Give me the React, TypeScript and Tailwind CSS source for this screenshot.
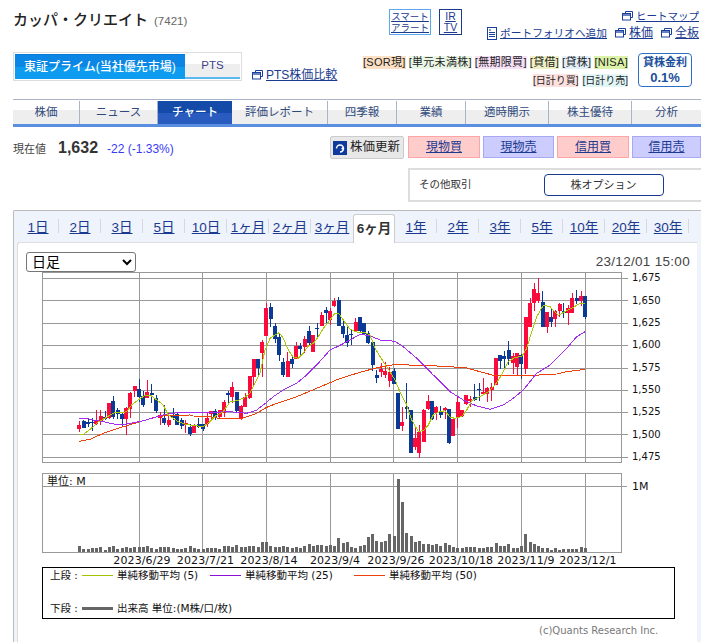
import React from "react";

const FONT = { fontFamily: '"Liberation Sans","Noto Sans CJK JP",sans-serif' };

type C = [number, number, number, number, number, number];
// x, wick top, wick bottom, body top, body bottom, 1 = up (red) 0 = down (blue); crop coords
const c5: C[] = [
  [148,452,486,465,478,1],[161,450,475,453,474,0],[174,445,472,456,462,0],[187,445,482,456,460,0],[199,420,465,450,462,1],[212,420,465,438,452,1],[225,424,450,442,446,0],[238,400,448,400,445,1],[250,378,448,393,440,0],[263,415,448,420,432,0],[276,425,470,432,446,0],[289,410,494,414,446,1],[301,365,445,368,418,1],[314,348,382,348,362,1],[327,327,395,357,380,0],[340,362,410,378,405,0],[352,330,385,366,384,1],[365,342,400,370,375,0],[378,375,428,385,424,0],[391,425,465,435,445,1],[403,405,465,444,460,0],[416,430,470,450,465,1],[429,415,450,435,445,0],[442,430,465,432,464,0],[455,445,478,450,468,0],[467,450,488,459,465,1],[480,462,497,472,492,0],[493,462,490,465,488,1],[506,445,475,462,470,0],[519,462,482,462,476,0],[531,430,470,443,462,1],[544,422,450,424,432,1],[556,418,450,424,444,0],[569,420,445,420,440,1],[582,390,440,396,428,1],[595,362,398,370,376,0],[607,335,400,352,380,1],[620,365,425,366,422,0],[633,405,450,408,446,1],[646,370,412,382,410,1],[659,318,388,318,385,1],[671,267,348,267,320,1],[684,267,320,267,293,0],[697,210,320,216,250,1],[709,100,198,114,198,1],[722,100,172,110,147,0],[735,160,218,168,208,0],[747,188,272,202,255,0],[760,265,322,276,315,0],[773,245,322,273,320,1],[786,262,295,267,282,0],[798,215,268,228,268,1],[811,220,258,227,236,0],[824,198,250,207,232,1],[837,168,225,183,220,0],[849,195,247,195,245,1],[862,158,205,174,178,0],[875,127,168,135,168,1],[888,112,158,120,130,0],[900,115,165,124,150,1],[913,85,110,92,108,1],[926,80,168,90,168,0],
];
const c6: C[] = [
  [9,152,205,168,192,0],[21,170,230,195,218,0],[34,180,225,192,195,0],[47,145,185,156,182,1],[60,141,190,141,182,0],[72,158,195,158,192,0],[85,182,222,190,218,0],[98,215,303,216,285,0],[110,300,338,315,323,0],[123,280,322,297,305,1],[136,275,325,303,315,1],[149,292,350,307,332,1],[162,295,342,304,342,0],[174,368,476,370,476,0],[187,410,482,456,468,1],[200,340,448,410,418,0],[213,420,548,420,548,0],[225,468,540,505,530,1],[238,465,563,486,548,1],[251,418,515,420,515,1],[264,375,420,392,416,1],[276,392,450,392,446,0],[289,408,450,412,430,1],[302,408,445,424,434,0],[315,412,448,414,420,1],[327,417,522,418,518,0],[340,445,497,447,497,1],[353,380,475,396,445,1],[366,420,442,420,438,1],[378,375,405,376,403,1],[391,378,410,388,394,1],[404,342,392,381,389,0],[417,338,392,357,361,0],[429,325,372,366,372,1],[442,352,395,354,372,1],[455,340,392,351,360,1],[468,265,345,265,345,1],[480,255,297,256,272,0],[493,243,298,259,266,0],[506,213,285,240,268,0],[519,250,312,258,278,1],[532,248,316,250,292,1],[544,252,326,254,282,0],[557,140,312,142,296,1],[570,85,172,98,172,1],[582,40,122,57,100,1],[595,24,100,70,92,1],[608,64,170,96,170,0],[621,126,190,126,170,1],[634,118,170,142,155,0],[646,120,172,124,146,1],[659,100,142,102,124,1],[671,100,145,122,128,0],[684,105,165,114,128,1],[697,70,128,84,128,1],[710,60,102,84,92,0],[723,64,108,78,92,1],[735,78,148,78,140,0],
];
const candles = [
  ...c5.map(([x, a, b, c, d, u]) => ({ x: 30 + x / 3, a: 270 + a / 3, b: 270 + b / 3, c: 270 + c / 3, d: 270 + d / 3, u })),
  ...c6.map(([x, a, b, c, d, u]) => ({ x: 340 + x / 3, a: 270 + a / 3, b: 270 + b / 3, c: 270 + c / 3, d: 270 + d / 3, u })),
];

const p5 = (a: number[][]) => a.map(([x, y]) => `${(30 + x / 3).toFixed(1)},${(270 + y / 3).toFixed(1)}`).join(" ");
const p6 = (a: number[][]) => a.map(([x, y]) => `${(340 + x / 3).toFixed(1)},${(270 + y / 3).toFixed(1)}`).join(" ");

const ma5 = p5([[148,493],[160,493],[175,482],[190,470],[205,455],[225,445],[240,435],[255,428],[275,428],[290,425],[305,405],[320,393],[345,376],[360,375],[378,388],[400,405],[415,435],[430,445],[445,455],[465,462],[480,465],[505,468],[520,470],[540,455],[560,435],[580,425],[600,395],[620,392],[640,385],[660,370],[675,340],[690,310],[705,240],[720,205],[735,195],[747,188],[760,205],[775,240],[790,262],[805,265],[820,250],[835,228],[850,220],[865,200],[880,175],[900,150],[915,130],[926,130]]) + " " + p6([[10,150],[30,178],[50,186],[75,188],[90,195],[105,235],[130,275],[150,305],[165,330],[180,365],[200,405],[215,450],[235,484],[250,482],[265,465],[280,435],[300,425],[315,422],[330,442],[345,445],[365,440],[380,420],[395,392],[420,380],[445,365],[465,345],[485,315],[505,275],[525,262],[545,260],[560,235],[575,185],[590,140],[610,106],[630,110],[655,136],[675,125],[700,112],[720,100],[735,100]]);
const ma25 = p5([[148,445],[170,445],[190,450],[220,455],[255,463],[285,463],[310,458],[340,452],[365,445],[400,435],[440,428],[490,428],[540,427],[600,425],[650,430],[680,420],[700,405],[730,380],[760,360],[800,340],[830,315],[860,285],[900,240],[926,228]]) + " " + p6([[30,210],[60,193],[90,197],[120,210],[165,214],[190,230],[230,265],[280,315],[330,365],[370,390],[410,408],[450,418],[490,405],[520,385],[550,360],[590,310],[630,285],[680,235],[710,200],[735,185]]);
const ma50 = p5([[148,514],[180,508],[220,490],[280,470],[320,458],[380,440],[420,436],[480,435],[490,438],[540,440],[560,444],[640,444],[680,430],[710,412],[740,400],[800,380],[860,355],[900,338],[926,327]]) + " " + p6([[50,310],[110,293],[160,284],[250,286],[330,290],[380,294],[420,305],[460,316],[520,316],[580,316],[650,312],[680,305],[735,298]]);

const v5 = [[148,228],[161,237],[174,236],[187,234],[199,234],[212,231],[225,241],[238,232],[250,228],[263,237],[276,235],[289,232],[301,235],[314,232],[327,231],[340,232],[352,228],[365,233],[378,236],[391,231],[403,232],[416,232],[429,235],[442,237],[455,237],[467,234],[480,228],[493,233],[506,237],[519,237],[531,235],[544,234],[556,235],[569,237],[582,228],[595,228],[607,231],[620,225],[633,230],[646,232],[659,229],[671,229],[684,232],[697,216],[709,216],[722,228],[735,232],[747,232],[760,228],[773,231],[786,233],[798,232],[811,235],[824,227],[837,222],[849,227],[862,225],[875,225],[888,227],[900,225],[913,228],[926,204]];
const v6 = [[9,219],[21,216],[34,232],[47,234],[60,228],[72,225],[85,201],[98,192],[110,213],[123,215],[136,213],[149,192],[162,198],[174,27],[187,96],[200,189],[213,198],[225,215],[238,213],[251,222],[264,222],[276,225],[289,222],[302,228],[315,219],[327,225],[340,231],[353,233],[366,233],[378,230],[391,232],[404,231],[417,233],[429,234],[442,232],[455,231],[468,219],[480,228],[493,228],[506,222],[519,234],[532,234],[544,228],[557,192],[570,216],[582,222],[595,228],[608,234],[621,234],[634,240],[646,234],[659,240],[671,237],[684,237],[697,237],[710,237],[723,231],[735,234]];
const vols = [...v5.map(([x, y]) => ({ x: 30 + x / 3, y: 470 + y / 3 })), ...v6.map(([x, y]) => ({ x: 340 + x / 3, y: 470 + y / 3 }))];

const hLines = [300, 322.5, 344.5, 367.5, 389.5, 411.5, 434, 456.5, 277.5];
const vLines = [139.5, 202.5, 266.5, 330.5, 393.5, 457.5, 521.5, 585.5];
const prices: [string, number][] = [["1,675",277.5],["1,650",300],["1,625",322.5],["1,600",344.5],["1,575",367.5],["1,550",389.5],["1,525",411.5],["1,500",434],["1,475",456.5]];
const dates: [string, number][] = [["2023/6/29",142],["2023/7/21",205.5],["2023/8/14",269],["2023/9/4",335],["2023/9/26",396],["2023/10/18",461],["2023/11/9",526],["2023/12/1",588]];
const sans = '"DejaVu Sans","Noto Sans CJK JP",sans-serif';

function Chart() {
  return (
    <svg width={679} height={370} viewBox="18 272 679 370" className="block">
      <g stroke="#999" strokeWidth={1} fill="none" shapeRendering="crispEdges">
        <rect x={42.5} y={272.5} width={579} height={190} />
        {hLines.map((y) => <line key={y} x1={42} x2={628} y1={Math.round(y) + 0.5} y2={Math.round(y) + 0.5} />)}
        {vLines.map((x) => <line key={x} x1={x} x2={x} y1={272} y2={463} />)}
        <rect x={42.5} y={473.5} width={579} height={79} />
        <line x1={42} x2={627} y1={486.5} y2={486.5} />
        {vLines.map((x) => <line key={x} x1={x} x2={x} y1={473} y2={552} />)}
      </g>
      {candles.map((k, i) => (
        <g key={i} fill={k.u ? "#fb0a3c" : "#0a3a96"} shapeRendering="crispEdges">
          <rect x={k.x - 0.5} y={k.a} width={1} height={k.b - k.a} />
          <rect x={k.x - 2} y={k.c} width={4} height={k.d - k.c} />
        </g>
      ))}
      <polyline points={ma50} fill="none" stroke="#f0400a" strokeWidth={1} shapeRendering="crispEdges" />
      <polyline points={ma25} fill="none" stroke="#a32cf0" strokeWidth={1} shapeRendering="crispEdges" />
      <polyline points={ma5} fill="none" stroke="#a8c800" strokeWidth={1} shapeRendering="crispEdges" />
      {vols.map((v, i) => <rect key={i} x={v.x - 1.5} y={v.y} width={3} height={552 - v.y} fill="#666" shapeRendering="crispEdges" />)}
      <g fontFamily={sans} fontSize={11} fill="#111">
        {prices.map(([t, y]) => <text key={t} x={632} y={y + 3.5} fontSize={10}>{t}</text>)}
        <text x={632} y={490}>1M</text>
        <text x={47} y={485}>単位: M</text>
        {dates.map(([t, x]) => <text key={t} x={x} y={564} textAnchor="middle" letterSpacing={0.1}>{t}</text>)}
      </g>
      <rect x={42.5} y={567.5} width={632} height={51} fill="none" stroke="#000" shapeRendering="crispEdges" />
      <g fontFamily={sans} fontSize={10.5} fill="#111">
        <text x={50} y={579}>上段 :</text>
        <line x1={82} x2={113} y1={575.5} y2={575.5} stroke="#a3c400" />
        <text x={117} y={579}>単純移動平均 (5)</text>
        <line x1={210} x2={241} y1={575.5} y2={575.5} stroke="#8a10d8" />
        <text x={245} y={579}>単純移動平均 (25)</text>
        <line x1={354} x2={385} y1={575.5} y2={575.5} stroke="#f0400a" />
        <text x={389} y={579}>単純移動平均 (50)</text>
        <text x={50} y={612}>下段 :</text>
        <rect x={82} y={607} width={31} height={3} fill="#666" />
        <text x={117} y={612}>出来高 単位:(M株/口/枚)</text>
      </g>
      <text x={539} y={634} fontFamily={sans} fontSize={10} fill="#777">(c)Quants Research Inc.</text>
    </svg>
  );
}

function WinIcon() {
  return (
    <svg width={11} height={10} viewBox="0 0 11 10" className="shrink-0" fill="none" stroke="#1a3f9c">
      <path d="M3.5 2.5V0.5H10.5V6.5H8.5" />
      <rect x={0.5} y={2.5} width={8} height={6.5} strokeWidth={1} />
      <path d="M1 4H8" strokeWidth={1.3} />
    </svg>
  );
}

function Ln({ children, className = "" }: { children: React.ReactNode; className?: string }) {
  return <span className={`text-[#1a3a8f] underline whitespace-nowrap ${className}`}>{children}</span>;
}

const tagList1: [string, string][] = [
  ["[SOR現]", "bg-[#fde0c4]"],
  ["[単元未満株]", "bg-[#e9f6e6]"],
  ["[無期限買]", "bg-[#f6e0f6]"],
  ["[貸借]", "bg-[#eef0c4]"],
  ["[貸株]", "bg-[#e2eef9]"],
  ["[NISA]", "bg-[#dcf2a8]"],
];
const tagList2: [string, string][] = [
  ["[日計り買]", "bg-[#fde0e0]"],
  ["[日計り売]", "bg-[#e2f6f8]"],
];

const nav: [string, string][] = [
  ["株価", "w-[67px]"],
  ["ニュース", "w-[78px]"],
  ["チャート", "w-[74px]"],
  ["評価レポート", "w-[96px]"],
  ["四季報", "w-[69px]"],
  ["業績", "w-[69px]"],
  ["適時開示", "w-[83px]"],
  ["株主優待", "w-[83px]"],
  ["分析", "w-[69px]"],
];

const tabs = ["1日","2日","3日","5日","10日","1ヶ月","2ヶ月","3ヶ月","6ヶ月","1年","2年","3年","5年","10年","20年","30年"];

function TradeBtn({ label, buy, className }: { label: string; buy: boolean; className: string }) {
  return (
    <div className={`h-[22px] flex items-center justify-center border text-[12px] ${buy ? "bg-[#ffcccc] border-[#ffa5a5]" : "bg-[#ccccff] border-[#a8a8f5]"} ${className}`}>
      <Ln>{label}</Ln>
    </div>
  );
}

export default function App() {
  return (
    <div style={FONT} className="w-[701px] h-[642px] overflow-hidden bg-white text-[#333] relative">
      {/* header */}
      <div className="h-[50px] flex">
        <div className="pl-[13px] pt-[9px] flex items-baseline h-fit">
          <span className="text-[15px] font-medium text-[#222]">カッパ・クリエイト</span>
          <span className="text-[11.5px] text-[#666] ml-[6px]">(7421)</span>
        </div>
        <div className="ml-auto flex">
          <div className="mt-[9px] w-[42px] h-[26px] border border-[#5ea6ee] flex flex-col items-center justify-center text-[9.5px] leading-[11px] text-[#1a3a8f] underline">
            <span>スマート</span><span>アラート</span>
          </div>
          <div className="mt-[9px] ml-[8px] w-[23px] h-[26px] border border-[#1a3a8f] flex flex-col items-center justify-center text-[10.5px] leading-[11px] text-[#1a3a8f] underline">
            <span>IR</span><span>TV</span>
          </div>
          <div className="ml-[25px] w-[212px] mr-[2px] pt-[9px] flex flex-col items-end text-[12px] leading-[14px]">
            <div className="flex items-center gap-[3px] text-[10.5px]"><WinIcon /><Ln>ヒートマップ</Ln></div>
            <div className="flex items-center mt-[3px] whitespace-nowrap">
              <svg width={10} height={13} viewBox="0 0 10 13" className="mr-[3px] shrink-0" fill="none" stroke="#1a3f9c">
                <rect x={0.5} y={0.5} width={9} height={12} />
                <path d="M2 3H4M2 5.5H8M2 7.5H8M2 9.5H8" />
              </svg>
              <Ln className="text-[10.7px]">ポートフォリオへ追加</Ln>
              <span className="ml-[8px]"><WinIcon /></span><Ln className="ml-[3px]">株価</Ln>
              <span className="ml-[8px]"><WinIcon /></span><Ln className="ml-[3px]">全板</Ln>
            </div>
          </div>
        </div>
      </div>

      {/* market row */}
      <div className="h-[49px] flex">
        <div className="ml-[13px] mt-[2px] w-[229px] h-[29px] border border-[#ddd] p-[1px] flex">
          <div className="w-[170px] bg-[linear-gradient(#0b86e4_50%,#0e9cf0_50%)] border-t border-[#077ad8] flex items-center justify-center text-white text-[12px] font-medium">東証プライム(当社優先市場)</div>
          <div className="flex-1 bg-[linear-gradient(#fff_42%,#eee_42%)] border-b-2 border-[#5cb8f0] flex items-center justify-center text-[11.5px] text-[#3f3f8f]">PTS</div>
        </div>
        <div className="ml-[10px] mt-[16px] flex items-center gap-[3px] h-fit text-[12px]"><WinIcon /><Ln>PTS株価比較</Ln></div>
        <div className="ml-auto mt-[6px] flex flex-col items-end text-[11px] leading-[13px] text-[#222] gap-[5px] whitespace-nowrap">
          <div className="flex gap-[3px] tracking-[0.3px]">{tagList1.map(([t, c]) => <span key={t} className={c}>{t}</span>)}</div>
          <div className="flex gap-[4px] text-[10px]">{tagList2.map(([t, c]) => <span key={t} className={c}>{t}</span>)}</div>
        </div>
        <div className="ml-[10px] mr-[9px] mt-[3px] w-[54px] h-[34px] rounded-[4px] border border-[#2a6fc4] flex flex-col items-center justify-center text-[#1a4f9c] font-bold leading-[16px] shrink-0">
          <span className="text-[11px]">貸株金利</span><span className="text-[13px]">0.1%</span>
        </div>
      </div>

      {/* nav */}
      <div className="ml-[13px] h-[28px] border-t border-[#aab4c8] border-b-[3px] border-b-[#5a8ee0] flex pt-[1px]">
        {nav.map(([t, w], i) => (
          <div key={t} className={`${w} flex items-center justify-center text-[11.5px] ${i === 2 ? "bg-[linear-gradient(#154ba8_50%,#2a5cc0_50%)] text-white font-medium" : `bg-[linear-gradient(#fff_40%,#eee_40%)] text-[#2f4a7c] ${i < 8 ? "border-r border-[#aab4c8]" : ""}`}`}>{t}</div>
        ))}
      </div>

      {/* price + buttons */}
      <div className="h-[41px] flex">
        <div className="pl-[13px] pt-[9px] flex items-baseline h-fit">
          <span className="text-[11px] text-[#444]">現在値</span>
          <span className="ml-[12px] text-[16px] font-bold text-[#333]">1,632</span>
          <span className="ml-[9px] text-[12px] text-[#3a3af5]">-22 (-1.33%)</span>
        </div>
        <div className="ml-auto flex mt-[9px] h-[22px]">
          <div className="w-[74px] h-[23px] bg-[#e8e8e8] border border-[#ccc] rounded-[2px] flex items-center text-[12.5px] text-[#222] pl-[2px] whitespace-nowrap">
            <svg width={14} height={14} viewBox="0 0 14 14" className="shrink-0 mr-[3px]">
              <rect width={14} height={14} fill="#0d3a9c" />
              <path d="M3.5 7.5A3.5 3.5 0 1 1 7 11" fill="none" stroke="#fff" strokeWidth={1.5} />
              <path d="M10 5.5L11 9L8 8Z" fill="#fff" />
            </svg>
            株価更新
          </div>
          <TradeBtn label="現物買" buy className="ml-[4px] w-[72px]" />
          <TradeBtn label="現物売" buy={false} className="ml-[3px] w-[71px]" />
          <TradeBtn label="信用買" buy className="ml-[3px] w-[72px]" />
          <TradeBtn label="信用売" buy={false} className="ml-[3px] w-[69px]" />
        </div>
      </div>

      {/* other trades */}
      <div className="ml-[408px] h-[34px] border-2 border-r-0 border-[#ddd] flex items-center text-[10.5px] text-[#333]">
        <span className="ml-[9px]">その他取引</span>
        <div className="ml-[72px] w-[120px] h-[22px] border border-[#1a3a8f] rounded-[4px] flex items-center justify-center text-[11px] text-[#333]">株オプション</div>
      </div>

      {/* chart panel */}
      <div className="ml-[13px] mt-[8px] w-[688px] border border-[#bbb] border-r-0 border-b-0 rounded-tl-[2px] bg-[#eff3fb] pl-[3px] h-[432px]">
        <div className="h-[31px] flex pt-[3px]">
          {tabs.map((t) => (
            <div key={t} className={`w-[42px] flex items-center justify-center text-[13.5px] ${t === "6ヶ月" ? "bg-white border border-b-0 border-[#ccc] rounded-t-[3px] font-bold text-[#333] text-[12.5px] -mb-[1px] relative z-10" : "text-[#1a3a8f] underline relative"}`}>
              {t}
              {t !== "6ヶ月" && t !== "3ヶ月" && <span className="absolute right-0 top-[5px] h-[14px] w-px bg-[#d5d8e0]" />}
            </div>
          ))}
        </div>
        <div className="w-[680px] bg-white border-t border-l border-[#ddd] rounded-tl-[3px] h-[400px]">
          <div className="h-[29px] flex">
            <div className="ml-[8px] mt-[9px] w-[110px] h-[20px] border border-[#767676] rounded-[3px] flex items-center justify-between pl-[5px] pr-[3px] text-[14px] text-black bg-white relative z-10">
              <span>日足</span>
              <svg width={10} height={8} viewBox="0 0 10 8"><path d="M1 2L5 6L9 2" fill="none" stroke="#000" strokeWidth={2} /></svg>
            </div>
            <span className="ml-auto mr-[7px] mt-[9px] text-[13.5px] text-[#444] tracking-[0.3px] h-fit">23/12/01 15:00</span>
          </div>
          <Chart />
        </div>
      </div>
    </div>
  );
}
